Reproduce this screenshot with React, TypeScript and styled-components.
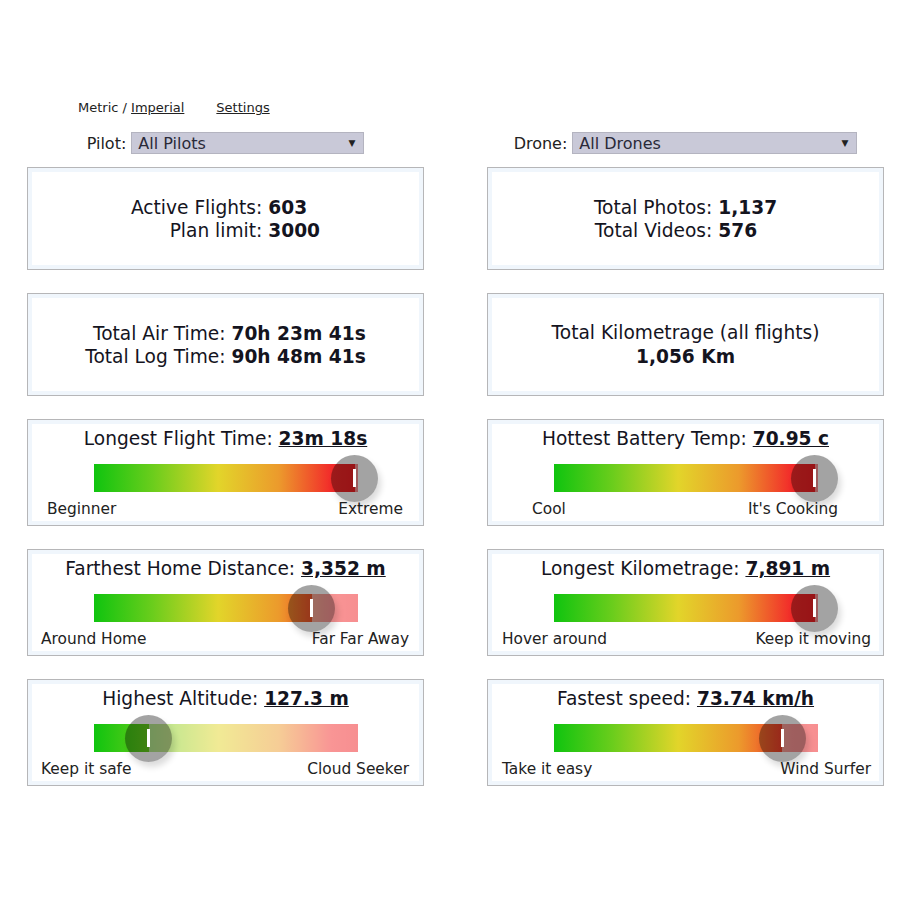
import React from 'react';
import styled, { createGlobalStyle } from 'styled-components';

const Global = createGlobalStyle`
  body {
    margin: 0;
    background: #ffffff;
    font-family: "DejaVu Sans", Verdana, sans-serif;
    color: #14141e;
  }
`;

type Gauge = {
  title: string;
  value: string;
  pct: number;
  low: string;
  high: string;
  pad: [number, number];
};

const leftGauges: Gauge[] = [
  { title: 'Longest Flight Time:', value: '23m 18s', pct: 0.99, low: 'Beginner', high: 'Extreme', pad: [15, 16] },
  { title: 'Farthest Home Distance:', value: '3,352 m', pct: 0.826, low: 'Around Home', high: 'Far Far Away', pad: [9, 10] },
  { title: 'Highest Altitude:', value: '127.3 m', pct: 0.21, low: 'Keep it safe', high: 'Cloud Seeker', pad: [9, 10] },
];

const rightGauges: Gauge[] = [
  { title: 'Hottest Battery Temp:', value: '70.95 c', pct: 0.99, low: 'Cool', high: "It's Cooking", pad: [40, 41] },
  { title: 'Longest Kilometrage:', value: '7,891 m', pct: 0.99, low: 'Hover around', high: 'Keep it moving', pad: [10, 8] },
  { title: 'Fastest speed:', value: '73.74 km/h', pct: 0.867, low: 'Take it easy', high: 'Wind Surfer', pad: [10, 8] },
];

const GaugeCard = ({ g }: { g: Gauge }) => (
  <S.Card>
    <S.GaugeInner>
      <S.GaugeTitle>
        {g.title} <S.Under>{g.value}</S.Under>
      </S.GaugeTitle>
      <S.Track>
        <S.Fade style={{ left: `${g.pct * 100}%` }} />
        <S.Thumb style={{ left: `${g.pct * 100}%` }}>
          <S.Tick />
        </S.Thumb>
      </S.Track>
      <S.Ends $l={g.pad[0]} $r={g.pad[1]}>
        <span>{g.low}</span>
        <span>{g.high}</span>
      </S.Ends>
    </S.GaugeInner>
  </S.Card>
);

const Select = ({ label, value, width }: { label: string; value: string; width: number }) => (
  <S.Picker>
    <S.PickLabel>{label}</S.PickLabel>
    <S.Box $w={width}>
      <span>{value}</span>
      <S.Arrow>▼</S.Arrow>
    </S.Box>
  </S.Picker>
);

const App = () => {
  return (
    <S.Page>
      <Global />
      <S.Links>
        <span>
          Metric / <S.Link>Imperial</S.Link>
        </span>
        <S.Link>Settings</S.Link>
      </S.Links>
      <S.Pickers>
        <Select label="Pilot:" value="All Pilots" width={233} />
        <Select label="Drone:" value="All Drones" width={285} />
      </S.Pickers>
      <S.Grid>
        <S.Card>
          <S.StatInner>
            <S.Table>
              <S.Key>Active Flights:</S.Key>
              <S.Val>603</S.Val>
              <S.Key>Plan limit:</S.Key>
              <S.Val>3000</S.Val>
            </S.Table>
          </S.StatInner>
        </S.Card>
        <S.Card>
          <S.StatInner>
            <S.Table>
              <S.Key>Total Photos:</S.Key>
              <S.Val>1,137</S.Val>
              <S.Key>Total Videos:</S.Key>
              <S.Val>576</S.Val>
            </S.Table>
          </S.StatInner>
        </S.Card>
        <S.Card>
          <S.StatInner>
            <S.Table>
              <S.Key>Total Air Time:</S.Key>
              <S.Val>70h 23m 41s</S.Val>
              <S.Key>Total Log Time:</S.Key>
              <S.Val>90h 48m 41s</S.Val>
            </S.Table>
          </S.StatInner>
        </S.Card>
        <S.Card>
          <S.StatInner>
            <S.Centered>
              <div>Total Kilometrage (all flights)</div>
              <b>1,056 Km</b>
            </S.Centered>
          </S.StatInner>
        </S.Card>
        {leftGauges.map((g, i) => (
          <React.Fragment key={g.title}>
            <GaugeCard g={g} />
            <GaugeCard g={rightGauges[i]} />
          </React.Fragment>
        ))}
      </S.Grid>
    </S.Page>
  );
};

const S = {
  Page: styled.div`
    padding: 100px 0 60px 27px;
  `,
  Links: styled.div`
    display: flex;
    gap: 32px;
    margin-left: 51px;
    font-size: 13px;
    line-height: 16px;
    color: #222;
  `,
  Link: styled.span`
    text-decoration: underline;
  `,
  Pickers: styled.div`
    display: grid;
    grid-template-columns: 397px 397px;
    column-gap: 63px;
    margin: 16px 0 13px;
  `,
  Picker: styled.div`
    display: flex;
    justify-content: center;
    align-items: center;
    gap: 5px;
  `,
  PickLabel: styled.span`
    font-size: 16px;
    color: #222;
  `,
  Box: styled.div<{ $w: number }>`
    width: ${({ $w }) => $w}px;
    height: 22px;
    box-sizing: border-box;
    background: #c9c9d8;
    border: 1px solid #b4b4c0;
    display: flex;
    align-items: center;
    justify-content: space-between;
    padding: 0 8px 0 6px;
    font-size: 16px;
    color: #2a2a38;
  `,
  Arrow: styled.span`
    font-size: 9px;
    color: #222;
  `,
  Grid: styled.div`
    display: grid;
    grid-template-columns: 397px 397px;
    column-gap: 63px;
    row-gap: 23px;
  `,
  Card: styled.div`
    border: 1px solid #b6b6b8;
    background: #f0f6fc;
    padding: 4px;
  `,
  StatInner: styled.div`
    background: #fff;
    height: 93px;
    display: flex;
    align-items: center;
    justify-content: center;
    font-size: 18.6px;
  `,
  Table: styled.div`
    display: grid;
    grid-template-columns: auto auto;
    column-gap: 6px;
    line-height: 23px;
  `,
  Key: styled.span`
    text-align: right;
  `,
  Val: styled.span`
    font-weight: bold;
  `,
  Centered: styled.div`
    text-align: center;
    line-height: 24px;
  `,
  GaugeInner: styled.div`
    background: #fff;
    padding: 4px 0 3px;
    display: flex;
    flex-direction: column;
    align-items: center;
  `,
  GaugeTitle: styled.div`
    font-size: 18.6px;
    line-height: 22px;
  `,
  Under: styled.span`
    font-weight: bold;
    text-decoration: underline;
  `,
  Track: styled.div`
    position: relative;
    width: 264px;
    height: 28px;
    margin-top: 14px;
    background: linear-gradient(
      to right,
      #0fc40f 0%,
      #6acd1c 22%,
      #e2d52a 47%,
      #ec9a2c 70%,
      #f22a2a 90%,
      #ee1e22 100%
    );
  `,
  Fade: styled.div`
    position: absolute;
    top: 0;
    right: 0;
    bottom: 0;
    background: rgba(255, 255, 255, 0.5);
  `,
  Thumb: styled.div`
    position: absolute;
    top: 50%;
    width: 47px;
    height: 47px;
    margin: -23.5px 0 0 -23.5px;
    border-radius: 50%;
    background: rgba(0, 0, 0, 0.36);
    box-shadow: 3px 5px 6px rgba(0, 0, 0, 0.14);
    display: flex;
    align-items: center;
    justify-content: center;
  `,
  Tick: styled.div`
    width: 3px;
    height: 18px;
    background: #fff;
  `,
  Ends: styled.div<{ $l: number; $r: number }>`
    align-self: stretch;
    display: flex;
    justify-content: space-between;
    margin-top: 8px;
    padding: 0 ${({ $r }) => $r}px 0 ${({ $l }) => $l}px;
    font-size: 15.4px;
    line-height: 18px;
    color: #222;
  `,
};

export default App;
